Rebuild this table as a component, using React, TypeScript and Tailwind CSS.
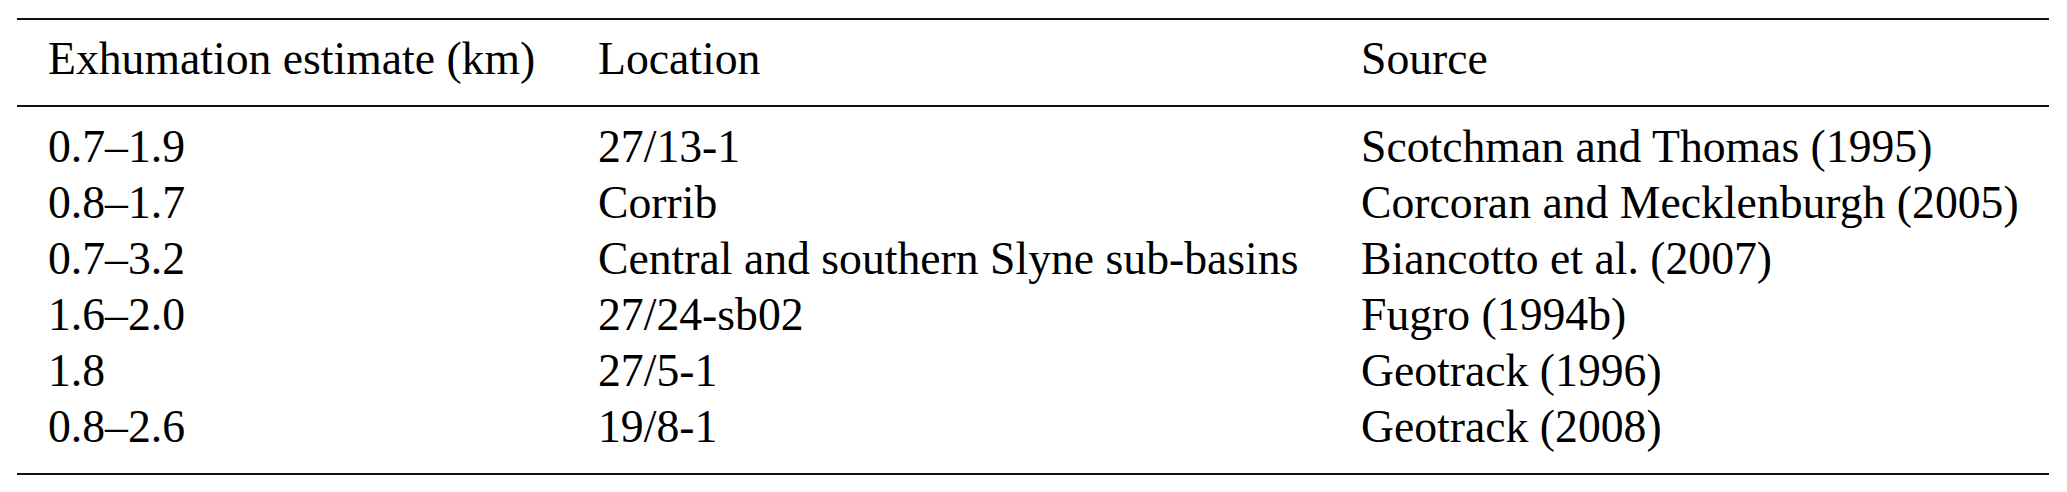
import React from "react";

const rows: [string, string, string][] = [
  ["0.7–1.9", "27/13-1", "Scotchman and Thomas (1995)"],
  ["0.8–1.7", "Corrib", "Corcoran and Mecklenburgh (2005)"],
  ["0.7–3.2", "Central and southern Slyne sub-basins", "Biancotto et al. (2007)"],
  ["1.6–2.0", "27/24-sb02", "Fugro (1994b)"],
  ["1.8", "27/5-1", "Geotrack (1996)"],
  ["0.8–2.6", "19/8-1", "Geotrack (2008)"],
];

export default function App() {
  return (
    <div className="w-[2067px] h-[492px] bg-white pl-[17px] pt-[18px] text-black font-['Liberation_Serif','Times_New_Roman',Times,'DejaVu_Serif',serif]">
      <div className="w-[2032px] border-t-2 border-b-2 border-[#111]">
        <div className="grid grid-cols-[550px_763px_1fr] pl-[31px] pt-[11px] pb-[18px] text-[45.7px] leading-[56px] border-b-2 border-[#111]">
          <div>Exhumation estimate (km)</div>
          <div>Location</div>
          <div>Source</div>
        </div>
        <div className="flex flex-col pl-[31px] pt-[12px] pb-[18px] text-[45.7px] leading-[56px]">
          {rows.map((r, i) => (
            <div key={i} className="grid grid-cols-[550px_763px_1fr]">
              <div>{r[0]}</div>
              <div>{r[1]}</div>
              <div>{r[2]}</div>
            </div>
          ))}
        </div>
      </div>
    </div>
  );
}
